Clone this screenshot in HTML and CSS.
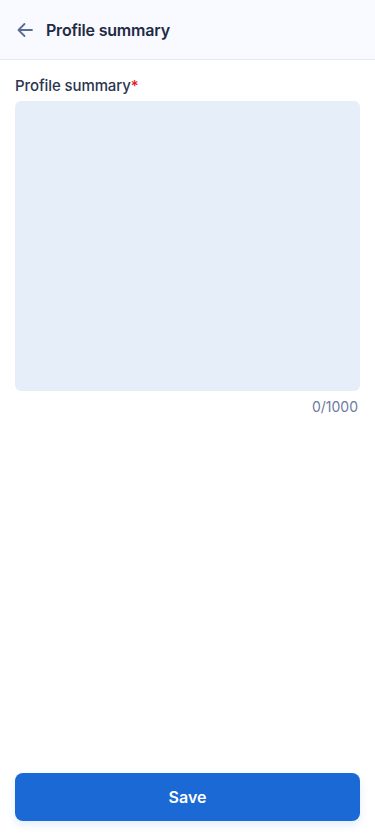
FILE: index.html
```html
<!DOCTYPE html>
<html>
<head>
<meta charset="utf-8">
<link rel="stylesheet" href="styles.css">
</head>
<body>
<div class="page">
  <header class="header">
    <svg class="back" width="18" height="18" viewBox="0 0 18 18" fill="none" stroke="#5a6b94" stroke-width="1.8" stroke-linecap="round" stroke-linejoin="round"><path d="M16 9H2.5M8.5 3L2.5 9l6 6"/></svg>
    <h1 class="title">Profile summary</h1>
  </header>
  <main class="content">
    <label class="label">Profile summary<span class="req">*</span></label>
    <div class="textarea"></div>
    <div class="counter">0/1000</div>
  </main>
  <footer class="footer">
    <button class="save">Save</button>
  </footer>
</div>
</body>
</html>
```
FILE: styles.css
```css
* { box-sizing: border-box; }
html, body { margin: 0; padding: 0; }
body { font-family: Inter, "Noto Sans", sans-serif; background: #fff; color: #1f2a44; }
.page { width: 375px; height: 836px; display: flex; flex-direction: column; }
.header { height: 60px; background: #f8faff; border-bottom: 1px solid #e6ebf3; display: flex; align-items: center; padding-left: 16px; }
.back { flex: none; }
.title { margin: 0 0 0 12px; font-size: 16px; font-weight: 600; color: #1f2a44; letter-spacing: -0.2px; }
.content { padding: 16px 15px 0; flex: 1; display: flex; flex-direction: column; }
.label { font-size: 15px; font-weight: 500; color: #2a3550; line-height: 20px; height: 21px; letter-spacing: -0.1px; }
.req { color: #e3191b; }
.textarea { margin-top: 4px; height: 290px; background: #e6eefa; border-radius: 6px; }
.counter { align-self: flex-end; margin-top: 7px; margin-right: 2px; font-size: 14px; color: #6b7aa0; line-height: 18px; }
.footer { padding: 0 15px 15px; }
.save { width: 100%; height: 48px; border: none; border-radius: 8px; background: #1a69d4; color: #fff; font-family: Inter, sans-serif; font-size: 16px; font-weight: 600; box-shadow: 0 4px 8px rgba(26,105,212,0.12); }
```
